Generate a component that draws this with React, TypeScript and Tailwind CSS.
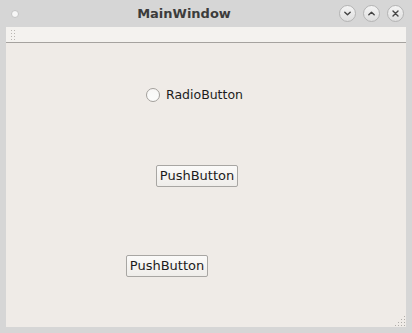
import React from 'react';

const font = { fontFamily: '"DejaVu Sans", sans-serif' };

const TitleButton = ({ children }: { children: React.ReactNode }) => (
  <div className="w-[17px] h-[17px] rounded-full border border-[#b4b4b4] bg-gradient-to-b from-[#f4f4f4] to-[#dedede] flex items-center justify-center">
    <svg width="9" height="9" viewBox="0 0 9 9" fill="none" stroke="#444" strokeWidth="1.4" strokeLinecap="round" strokeLinejoin="round">
      {children}
    </svg>
  </div>
);

const PushButton = ({ className }: { className: string }) => (
  <div
    className={`w-[82px] h-[22px] border border-[#a8a6a3] rounded-[2px] bg-gradient-to-b from-[#fbfaf9] to-[#efedea] flex items-center justify-center text-[13px] text-[#1c1c1c] ${className}`}
  >
    PushButton
  </div>
);

export default function App() {
  return (
    <div className="w-[412px] h-[333px] bg-[#d6d6d6] flex flex-col" style={font}>
      {/* title bar */}
      <div className="h-[27px] flex items-center px-[11px] shrink-0">
        <div className="w-[8px] h-[8px] rounded-full bg-[#f7f7f7] border border-[#c4c4c4]" />
        <div className="flex-1 text-center font-bold text-[13px] text-[#3c3c3c] pl-[10px] pt-[1px]">MainWindow</div>
        <div className="flex gap-[7px] mr-[-3px]">
          <TitleButton>
            <path d="M1.8 3.2 L4.5 5.8 L7.2 3.2" />
          </TitleButton>
          <TitleButton>
            <path d="M1.8 5.8 L4.5 3.2 L7.2 5.8" />
          </TitleButton>
          <TitleButton>
            <path d="M2 2 L7 7 M7 2 L2 7" />
          </TitleButton>
        </div>
      </div>

      <div className="flex-1 mx-[6px] mb-[6px] flex flex-col bg-[#efebe7]">
        {/* toolbar */}
        <div className="h-[15px] bg-[#f4f2ef] flex items-center pl-[5px]">
          <div className="grid grid-cols-2 gap-x-[2px] gap-y-[2px]">
            {Array.from({ length: 8 }).map((_, i) => (
              <div key={i} className="w-[1px] h-[1px] bg-[#b9b6b2]" />
            ))}
          </div>
        </div>
        <div className="h-[1px] bg-[#a5a29f]" />

        {/* central widget */}
        <div className="flex-1 flex flex-col relative">
          <div className="flex items-center mt-[43px] ml-[140px]">
            <div className="w-[14px] h-[14px] rounded-full border border-[#a3a09c] bg-gradient-to-b from-[#f8f7f6] to-[#fcfcfb]" />
            <span className="ml-[6px] text-[12.5px] text-[#1c1c1c]">RadioButton</span>
          </div>
          <PushButton className="mt-[60px] ml-[150px]" />
          <PushButton className="mt-[68px] ml-[120px]" />

          {/* size grip */}
          <div className="absolute right-[1px] bottom-[1px] grid grid-cols-4 gap-[2px]">
            {[0, 0, 0, 1, 0, 0, 1, 1, 0, 1, 1, 1, 1, 1, 1, 1].map((v, i) => (
              <div key={i} className={`w-[1px] h-[1px] ${v ? 'bg-[#b0ada9]' : ''}`} />
            ))}
          </div>
        </div>
      </div>
    </div>
  );
}
